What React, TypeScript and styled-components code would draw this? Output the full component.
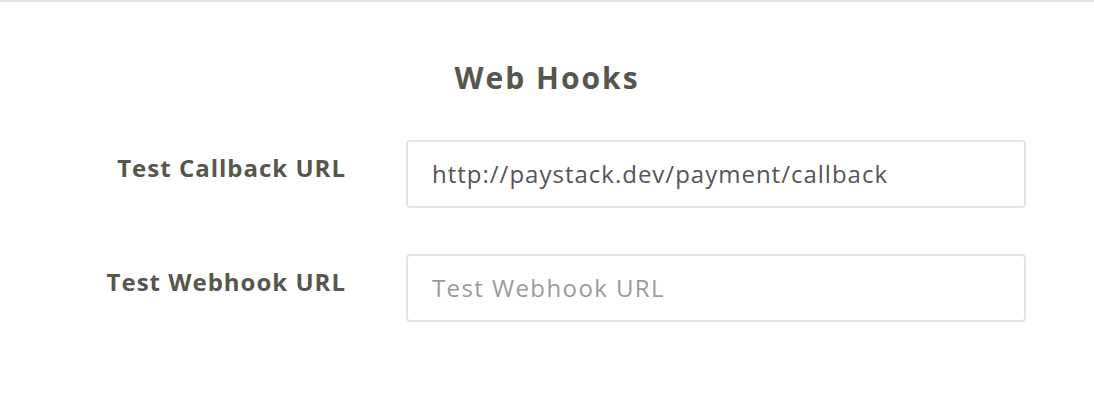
import React from "react";
import styled, { createGlobalStyle } from "styled-components";

const Global = createGlobalStyle`
  html, body { margin: 0; padding: 0; background: #fff; }
  body { font-family: "Open Sans", Lato, sans-serif; }
  * { box-sizing: border-box; }
`;

const Page = styled.div`
  border-top: 2px solid #dfe4e8;
  width: 1094px;
  height: 406px;
  padding-top: 58px;
`;

const Title = styled.h2`
  margin: 0 0 44px;
  text-align: center;
  font-size: 30px;
  font-weight: 700;
  letter-spacing: 2px;
  color: #56574c;
  line-height: 36px;
`;

const Form = styled.form`
  display: grid;
  grid-template-columns: 345px 620px;
  column-gap: 61px;
  row-gap: 46px;
  align-items: start;
`;

const Label = styled.label`
  text-align: right;
  font-size: 24px;
  font-weight: 700;
  letter-spacing: 1px;
  color: #56574c;
  line-height: 28px;
  padding-top: 14px;
  margin-right: -1px;
`;

const Input = styled.input`
  width: 620px;
  height: 68px;
  border: 2px solid #dfe4e7;
  border-radius: 4px;
  padding: 0 24px 2px;
  font-family: "Open Sans", Lato, sans-serif;
  font-size: 24px;
  letter-spacing: 1px;
  color: #555;
  outline: none;
  &::placeholder { color: #9a9a9a; letter-spacing: 1.4px; }
`;

export default function App() {
  return (
    <>
      <Global />
      <Page>
        <Title>Web Hooks</Title>
        <Form>
          <Label htmlFor="cb">Test Callback URL</Label>
          <Input id="cb" defaultValue="http://paystack.dev/payment/callback" />
          <Label htmlFor="wh">Test Webhook URL</Label>
          <Input id="wh" placeholder="Test Webhook URL" />
        </Form>
      </Page>
    </>
  );
}
